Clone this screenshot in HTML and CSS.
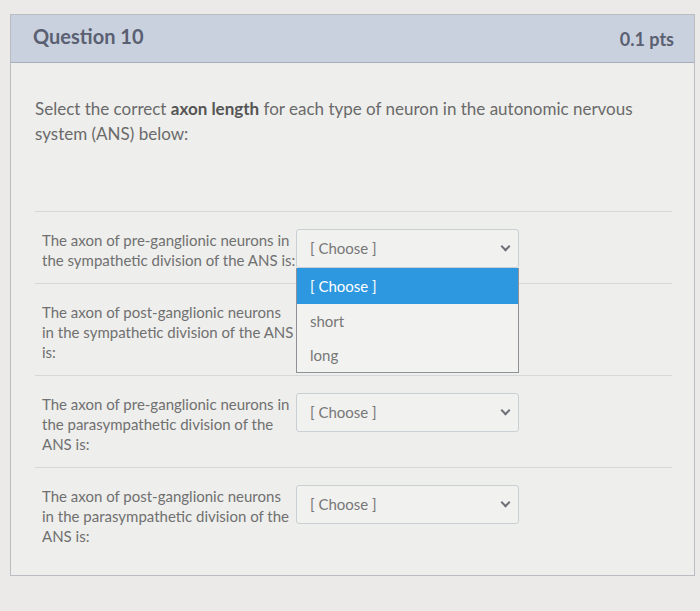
FILE: index.html
```html
<!DOCTYPE html>
<html lang="en">
<head>
  <meta charset="UTF-8" />
  <title>Question 10</title>
  <link rel="stylesheet" href="styles.css">
</head>
<body>
  <div class="quiz-card">
    <div class="quiz-header">
      <span class="quiz-title">Question 10</span>
      <span class="quiz-points">0.1 pts</span>
    </div>

    <div class="quiz-body">
      <div class="question-text">
        Select the correct <strong>axon length</strong> for each type of neuron in the autonomic nervous system (ANS) below:
      </div>

      <div class="answers">
        <div class="answer-row">
          <div class="answer-label">The axon of pre-ganglionic neurons in the sympathetic division of the ANS is:</div>
          <div class="select-wrap">
            <div class="select-box">
              <span class="select-text">[ Choose ]</span>
              <span class="chevron"></span>
            </div>
            <!-- open dropdown -->
            <ul class="dropdown">
              <li class="active">[ Choose ]</li>
              <li>short</li>
              <li>long</li>
            </ul>
          </div>
        </div>

        <div class="answer-row">
          <div class="answer-label">The axon of post-ganglionic neurons in the sympathetic division of the ANS is:</div>
          <div class="select-wrap">
            <div class="select-box">
              <span class="select-text">[ Choose ]</span>
              <span class="chevron"></span>
            </div>
          </div>
        </div>

        <div class="answer-row">
          <div class="answer-label">The axon of pre-ganglionic neurons in the parasympathetic division of the ANS is:</div>
          <div class="select-wrap">
            <div class="select-box">
              <span class="select-text">[ Choose ]</span>
              <span class="chevron"></span>
            </div>
          </div>
        </div>

        <div class="answer-row last">
          <div class="answer-label">The axon of post-ganglionic neurons in the parasympathetic division of the ANS is:</div>
          <div class="select-wrap">
            <div class="select-box">
              <span class="select-text">[ Choose ]</span>
              <span class="chevron"></span>
            </div>
          </div>
        </div>
      </div>
    </div>
  </div>
</body>
</html>
```

FILE: styles.css
```css
body {
  margin: 0;
  font-family: 'Lato', 'Liberation Sans', sans-serif;
  background-color: #ebeae8;
  color: #6b6b6b;
  padding: 14px 5px 0 10px;
}

.quiz-card {
  width: 683px;
  border: 1px solid #b9bcc0;
  background-color: #eeeeec;
}

.quiz-header {
  height: 47px;
  background-color: #c9d1df;
  border-bottom: 1px solid #a9afba;
  display: flex;
  align-items: center;
  justify-content: space-between;
  padding: 0 20px 0 22px;
}

.quiz-title {
  font-size: 20px;
  font-weight: 700;
  color: #5a6071;
  margin-top: -5px;
}

.quiz-points {
  font-size: 18px;
  font-weight: 700;
  color: #5a6071;
}

.quiz-body {
  padding: 33px 22px 16px 24px;
}

.question-text {
  font-size: 17px;
  line-height: 25px;
  color: #6a6a6a;
}

.question-text strong {
  color: #555;
}

.answers {
  margin-top: 65px;
  border-top: 1px solid #d5d8d9;
}

.answer-row {
  display: flex;
  align-items: flex-start;
  padding: 17px 0 13px 7px;
  border-bottom: 1px solid #d5d8d9;
}

.answer-row.last {
  border-bottom: none;
}

.answer-label {
  width: 254px;
  font-size: 15px;
  line-height: 20px;
  color: #707070;
  padding-top: 1px;
}

.select-wrap {
  position: relative;
  width: 223px;
}

.select-box {
  height: 37px;
  border: 1px solid #c9cfd3;
  border-radius: 3px;
  background-color: #f1f1ef;
  display: flex;
  align-items: center;
  justify-content: space-between;
  padding: 0 9px 0 13px;
}

.select-text {
  font-size: 15px;
  color: #777;
  margin-top: -2px;
}

.chevron {
  width: 5px;
  height: 5px;
  border-right: 2px solid #6e7178;
  border-bottom: 2px solid #6e7178;
  transform: rotate(45deg);
  margin-top: -4px;
}

.dropdown {
  position: absolute;
  top: 39px;
  left: 0;
  width: 221px;
  margin: 0;
  padding: 0;
  list-style: none;
  background-color: #f2f2f0;
  border: 1px solid #8e9196;
  border-top: none;
  z-index: 10;
}

.dropdown li {
  height: 34px;
  line-height: 34px;
  padding-left: 13px;
  font-size: 15px;
  color: #777;
}

.dropdown li.active {
  height: 36px;
  line-height: 36px;
  background-color: #2d97df;
  color: #ffffff;
}
```
